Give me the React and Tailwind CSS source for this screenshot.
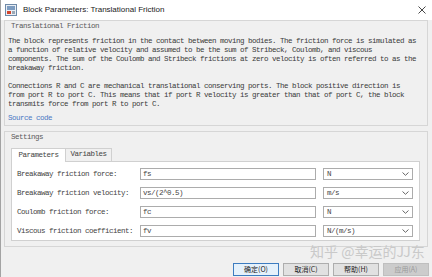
import React from "react";

const mono = { fontFamily: '"Liberation Mono", "DejaVu Sans Mono", monospace' };

const description = [
  "The block represents friction in the contact between moving bodies. The friction force is simulated as",
  "a function of relative velocity and assumed to be the sum of Stribeck, Coulomb, and viscous",
  "components. The sum of the Coulomb and Stribeck frictions at zero velocity is often referred to as the",
  "breakaway friction.",
  "",
  "Connections R and C are mechanical translational conserving ports. The block positive direction is",
  "from port R to port C. This means that if port R velocity is greater than that of port C, the block",
  "transmits force from port R to port C.",
];

const params = [
  { label: "Breakaway friction force:", value: "fs", unit: "N" },
  { label: "Breakaway friction velocity:", value: "vs/(2^0.5)", unit: "m/s" },
  { label: "Coulomb friction force:", value: "fc", unit: "N" },
  { label: "Viscous friction coefficient:", value: "fv", unit: "N/(m/s)" },
];

const BlockIcon = () => (
  <svg width="12" height="12" viewBox="0 0 12 12">
    <rect x="0.5" y="0.5" width="11" height="11" fill="#e9eef4" stroke="#6f8aa8" />
    <rect x="2" y="2" width="8" height="4" fill="#7d9cc0" />
    <rect x="2" y="7" width="4" height="3" fill="#d2452c" />
    <rect x="7" y="7" width="3" height="3" fill="#9aa7b4" />
  </svg>
);

const Chevron = () => (
  <svg width="7" height="4" viewBox="0 0 7 4">
    <polyline points="0.5,0.5 3.5,3.3 6.5,0.5" fill="none" stroke="#666" strokeWidth="1" />
  </svg>
);

const ParamRow = ({ label, value, unit }) => (
  <div className="flex items-center h-[12px]">
    <div className="w-[123px] text-[7.5px] tracking-[-0.5px] text-[#444] leading-[12px] whitespace-pre" style={mono}>
      {label}
    </div>
    <div className="w-[176px] h-[12px] border border-[#acacac] bg-white pl-[2px] text-[7.5px] tracking-[-0.5px] leading-[10px] text-[#444]" style={mono}>
      {value}
    </div>
    <div className="ml-[7px] w-[90px] h-[12px] border border-[#acacac] bg-white pl-[3px] pr-[3px] flex items-center justify-between">
      <span className="text-[7.5px] tracking-[-0.5px] leading-[10px] text-[#444]" style={mono}>
        {unit}
      </span>
      <Chevron />
    </div>
  </div>
);

const DialogButton = ({ children, focused, disabled }) => (
  <div
    className={`w-[46px] h-[13px] flex items-center justify-center text-[7px] ${
      focused
        ? "border border-[#3d7cc0] bg-[#e5f1fb] text-[#222]"
        : disabled
        ? "border border-[#bfbfbf] bg-[#cccccc] text-[#9a9a9a]"
        : "border border-[#adadad] bg-[#e1e1e1] text-[#222]"
    }`}
    style={{ fontFamily: '"Noto Sans CJK SC", "Noto Sans", sans-serif' }}
  >
    {children}
  </div>
);

export default function App() {
  return (
    <div className="relative w-[432px] h-[277px] overflow-hidden bg-[#f0f0f0] border-l border-[#a3a3a3] flex flex-col">
      {/* title bar */}
      <div className="h-[20px] bg-white flex items-center shrink-0">
        <div className="ml-[4px]">
          <BlockIcon />
        </div>
        <span
          className="ml-[6px] text-[8px] text-[#1a1a1a]"
          style={{ fontFamily: '"Liberation Sans", Arial, sans-serif' }}
        >
          Block Parameters: Translational Friction
        </span>
        <svg className="ml-auto mr-[6px]" width="8" height="8" viewBox="0 0 8 8">
          <path d="M0.5 0.5 L7.5 7.5 M7.5 0.5 L0.5 7.5" stroke="#333" strokeWidth="0.9" />
        </svg>
      </div>

      <div className="pl-[3px] pr-[4px] flex flex-col">
        {/* description */}
        <div className="h-[106px] border border-[#d6d6d6] flex flex-col">
          <div className="h-[11px] pl-[6px] text-[7.5px] tracking-[-0.5px] leading-[11px] text-[#5a5a5a]" style={mono}>
            Translational Friction
          </div>
          <div className="mt-[5px] pl-[3px] text-[7.5px] tracking-[-0.5px] leading-[9px] text-[#3a3a3a]" style={mono}>
            {description.map((line, i) => (
              <div key={i} className="h-[9px] whitespace-pre">
                {line}
              </div>
            ))}
            <div className="mt-[5px] h-[9px] text-[#4a78c4]">Source code</div>
          </div>
        </div>

        {/* settings */}
        <div className="mt-[5px] h-[116px] border border-[#d6d6d6] flex flex-col">
          <div className="h-[11px] pl-[6px] text-[7.5px] tracking-[-0.5px] leading-[11px] text-[#5a5a5a]" style={mono}>
            Settings
          </div>
          <div className="mt-[5px] pl-[6px] pr-[7px] flex flex-col">
            <div className="flex h-[14px] relative z-10 -mb-[1px]">
              <div
                className="w-[55px] h-[14px] bg-white border border-b-0 border-[#d0d0d0] flex items-center justify-center text-[7.5px] tracking-[-0.5px] text-[#444]"
                style={mono}
              >
                Parameters
              </div>
              <div
                className="w-[46px] h-[14px] bg-[#f0f0f0] border border-l-0 border-[#d0d0d0] flex items-center justify-center text-[7.5px] tracking-[-0.5px] text-[#444]"
                style={mono}
              >
                Variables
              </div>
            </div>
            <div className="h-[80px] bg-white border border-[#d0d0d0] pt-[6px] pl-[5px] flex flex-col gap-[7px]">
              {params.map((p) => (
                <ParamRow key={p.label} {...p} />
              ))}
            </div>
          </div>
        </div>
      </div>

      {/* buttons */}
      <div className="mt-[16px] pr-[3px] flex justify-end gap-[4px]">
        <DialogButton focused>确定(O)</DialogButton>
        <DialogButton>取消(C)</DialogButton>
        <DialogButton>帮助(H)</DialogButton>
        <DialogButton disabled>应用(A)</DialogButton>
      </div>

      {/* watermark */}
      <div
        className="absolute left-[309px] top-[243px] text-[14px] leading-[16px] text-[#c9c9c9] whitespace-nowrap"
        style={{ fontFamily: '"Noto Sans CJK SC", sans-serif' }}
      >
        知乎 @幸运的JJ东
      </div>
    </div>
  );
}
